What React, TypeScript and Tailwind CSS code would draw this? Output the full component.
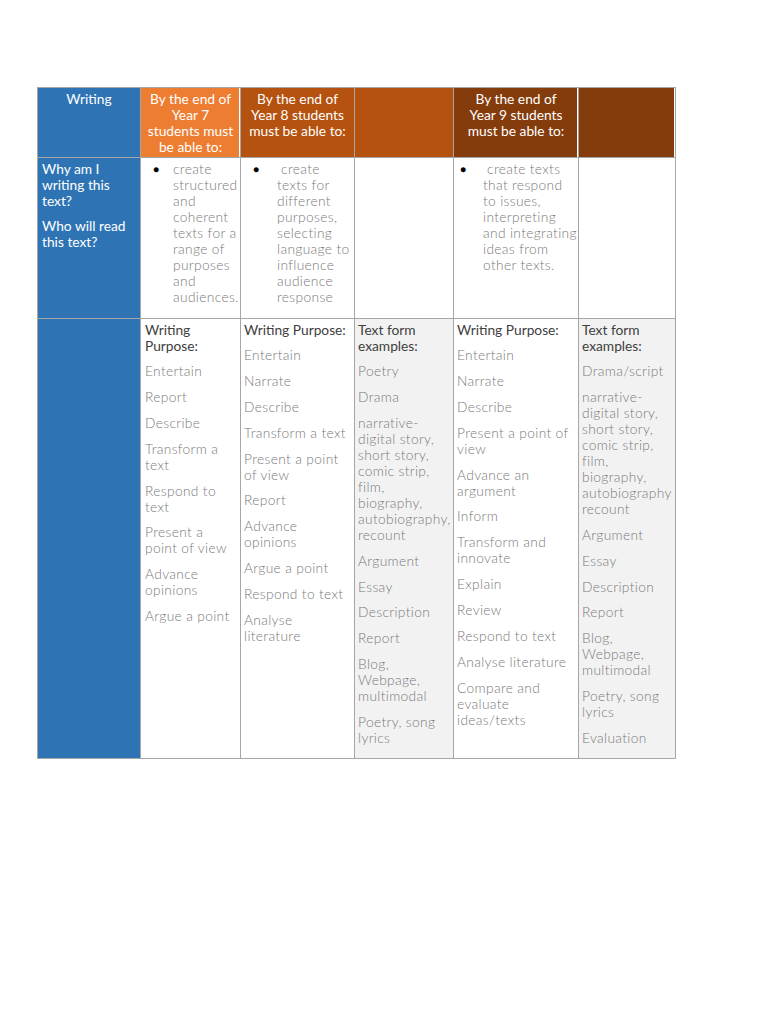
import React from 'react';

const col2Items = ['Entertain', 'Report', 'Describe', 'Transform a text', 'Respond to text', 'Present a point of view', 'Advance opinions', 'Argue a point'];
const col3Items = ['Entertain', 'Narrate', 'Describe', 'Transform a text', 'Present a point of view', 'Report', 'Advance opinions', 'Argue a point', 'Respond to text', 'Analyse literature'];
const col4Items = ['Poetry', 'Drama', 'narrative- digital story, short story, comic strip, film, biography, autobiography, recount', 'Argument', 'Essay', 'Description', 'Report', 'Blog, Webpage, multimodal', 'Poetry, song lyrics'];
const col5Items = ['Entertain', 'Narrate', 'Describe', 'Present a point of view', 'Advance an argument', 'Inform', 'Transform and innovate', 'Explain', 'Review', 'Respond to text', 'Analyse literature', 'Compare and evaluate ideas/texts'];
const col6Items = ['Drama/script', 'narrative- digital story, short story, comic strip, film, biography, autobiography recount', 'Argument', 'Essay', 'Description', 'Report', 'Blog, Webpage, multimodal', 'Poetry, song lyrics', 'Evaluation'];

function ItemList({ label, items }: { label: string; items: string[] }) {
  return (
    <div>
      <p className="text-[#404040] mb-[9px]">{label}</p>
      {items.map((item, i) => (
        <p key={i} className="font-light text-[#7a7a7a] tracking-[0.35px] mb-[9.9px]">
          {item}
        </p>
      ))}
    </div>
  );
}

function Bullet({ pad, indent, text }: { pad: string; indent: string; text: string }) {
  return (
    <div className={`flex ${pad}`}>
      <span className={`${indent} shrink-0 text-black text-[10px]`}>●</span>
      <p className="font-light text-[#7a7a7a] tracking-[0.35px]">{text}</p>
    </div>
  );
}

export default function App() {
  const cell = 'border border-[#a6a6a6] align-top';

  return (
    <div className="min-h-[1024px] w-[768px] bg-white pt-[87px] pl-[37px]" style={{ fontFamily: 'Lato, "Open Sans", sans-serif' }}>
      <table className="table-fixed border-collapse w-[638px] text-[13.75px] leading-[16px]">
        <colgroup>
          <col className="w-[103px]" />
          <col className="w-[100px]" />
          <col className="w-[114px]" />
          <col className="w-[99px]" />
          <col className="w-[125px]" />
          <col className="w-[97px]" />
        </colgroup>
        <tbody>
          <tr className="h-[70px]">
            <td className={`${cell} bg-[#2e74b5] text-white text-center pt-[3px]`}>Writing</td>
            <td className={`${cell} bg-[#ed7d31] text-white text-center pt-[3px] px-[6px] shadow-[inset_-1px_0_0_#ffffff]`}>
              By the end of Year 7 students must be able to:
            </td>
            <td className={`${cell} bg-[#b5520f] text-white text-center pt-[3px] px-[3px]`}>
              By the end of Year 8 students must be able to:
            </td>
            <td className={`${cell} bg-[#b5520f]`}></td>
            <td className={`${cell} bg-[#843c0c] text-white text-center pt-[3px] px-[8px] shadow-[inset_-1px_0_0_#ffffff]`}>
              By the end of Year 9 students must be able to:
            </td>
            <td className={`${cell} bg-[#843c0c] shadow-[inset_-1px_0_0_#ffffff]`}></td>
          </tr>
          <tr className="h-[161px]">
            <td className={`${cell} bg-[#2e74b5] text-white pt-[3px] pl-[4px] pr-[2px]`}>
              <p className="mb-[9px]">Why am I writing this text?</p>
              <p>Who will read this text?</p>
            </td>
            <td className={`${cell} bg-white pt-[3px]`}>
              <Bullet pad="pl-[12px]" indent="w-[20px]" text="create structured and coherent texts for a range of purposes and audiences." />
            </td>
            <td className={`${cell} bg-white pt-[3px]`}>
              <Bullet pad="pl-[12px]" indent="w-[24px]" text={'\u00a0create texts for different purposes, selecting language to influence audience response'} />
            </td>
            <td className={`${cell} bg-white`}></td>
            <td className={`${cell} bg-white pt-[3px]`}>
              <Bullet pad="pl-[6px]" indent="w-[23px]" text={'\u00a0create texts that respond to issues, interpreting and integrating ideas from other texts.'} />
            </td>
            <td className={`${cell} bg-white`}></td>
          </tr>
          <tr className="h-[440px]">
            <td className={`${cell} bg-[#2e74b5]`}></td>
            <td className={`${cell} bg-white pt-[3px] pl-[4px] pr-[2px]`}>
              <ItemList label="Writing Purpose:" items={col2Items} />
            </td>
            <td className={`${cell} bg-white pt-[3px] pl-[3px] pr-[2px]`}>
              <ItemList label="Writing Purpose:" items={col3Items} />
            </td>
            <td className={`${cell} bg-[#f2f2f2] pt-[3px] pl-[3px] pr-[1px]`}>
              <ItemList label="Text form examples:" items={col4Items} />
            </td>
            <td className={`${cell} bg-white pt-[3px] pl-[3px] pr-[2px]`}>
              <ItemList label="Writing Purpose:" items={col5Items} />
            </td>
            <td className={`${cell} bg-[#f2f2f2] pt-[3px] pl-[3px] pr-[1px]`}>
              <ItemList label="Text form examples:" items={col6Items} />
            </td>
          </tr>
        </tbody>
      </table>
    </div>
  );
}
